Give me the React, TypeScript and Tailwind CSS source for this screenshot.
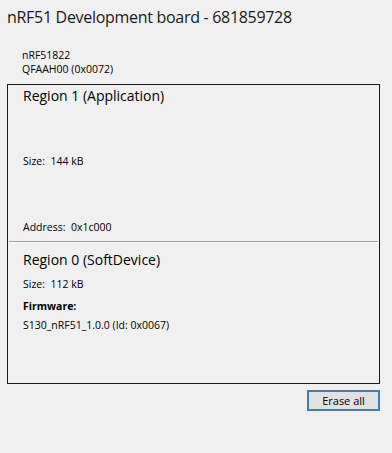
import React from "react";

const font = { fontFamily: '"Open Sans", "Noto Sans", sans-serif' };

export default function App() {
  return (
    <div
      className="w-[392px] h-[453px] bg-[#f0f0f0] text-[#000] overflow-hidden flex flex-col"
      style={font}
    >
      <div className="pl-[7px] pt-[5px] h-[48px] text-[16px] leading-[24px] tracking-[-0.3px] text-[#1a1a1a]">
        nRF51 Development board - 681859728
      </div>
      <div className="pl-[22px] text-[10.5px] leading-[14px] h-[36px] text-[#000]">
        <div>nRF51822</div>
        <div>QFAAH00 (0x0072)</div>
      </div>
      <div className="ml-[7px] w-[373px] h-[300px] border border-[#1a1a1a] flex flex-col">
        <div className="h-[156px] pl-[15px] flex flex-col">
          <div className="text-[14px] leading-[20px] pt-[1px]">Region 1 (Application)</div>
          <div className="text-[10.5px] leading-[14px] mt-[48px]">Size:&nbsp; 144 kB</div>
          <div className="text-[10.5px] leading-[14px] mt-[52px]">Address:&nbsp; 0x1c000</div>
        </div>
        <div className="mx-[1px] border-t border-[#a0a0a0] border-b border-b-white" />
        <div className="pl-[15px] flex flex-col">
          <div className="text-[14px] leading-[20px] pt-[7px]">Region 0 (SoftDevice)</div>
          <div className="text-[10.5px] leading-[14px] mt-[7px]">Size:&nbsp; 112 kB</div>
          <div className="text-[10.5px] leading-[14px] mt-[8px] font-bold">Firmware:</div>
          <div className="text-[10.5px] leading-[14px] mt-[5px]">S130_nRF51_1.0.0 (Id: 0x0067)</div>
        </div>
      </div>
      <div className="flex justify-end pr-[12px] mt-[6px]">
        <button className="w-[73px] h-[21px] bg-[#e1e1e1] border-2 border-[#3c7fb1] text-[11px] leading-none text-[#000] flex items-center justify-center" style={font}>
          Erase all
        </button>
      </div>
    </div>
  );
}
